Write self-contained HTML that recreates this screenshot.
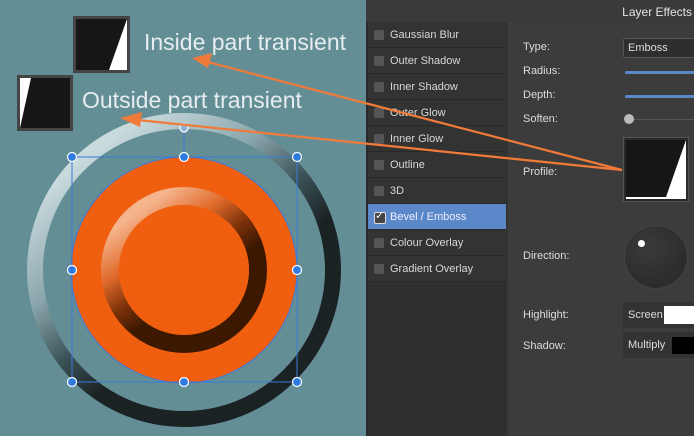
<!DOCTYPE html>
<html><head><style>
*{margin:0;padding:0;box-sizing:border-box}
body{width:694px;height:436px;overflow:hidden;background:#3c3c3c;font-family:"Liberation Sans",sans-serif;position:relative}
.canvas{position:absolute;left:0;top:0;width:366px;height:436px;background:#648e96}
.list{position:absolute;left:368px;top:22px;width:138px;height:414px;background:#2f2f2f}
.item{height:26px;border-bottom:1px solid #292929;background:#333;color:#d8d8d8;font-size:11px;line-height:26px;padding-left:22px;position:relative}
.item:before{content:"";position:absolute;left:6px;top:8px;width:10px;height:10px;background:#555;border-radius:2px}
.item.sel{background:#5b88c8;color:#eef}
.item.sel:before{background:#444;border:1px solid #ddd}
.hdr{position:absolute;left:366px;top:0;width:328px;height:22px;background:#3a3a3a;color:#e4e4e4;font-size:12px;line-height:24px;text-align:right;padding-right:2px}
.lbl{position:absolute;left:523px;color:#ddd;font-size:11px}
</style></head><body>
<div class="canvas"></div>
<div style="position:absolute;left:366px;top:0;width:2px;height:436px;background:#2a2a2a"></div>
<div class="hdr">Layer Effects</div>
<div class="list">
<div class="item">Gaussian Blur</div>
<div class="item">Outer Shadow</div>
<div class="item">Inner Shadow</div>
<div class="item">Outer Glow</div>
<div class="item">Inner Glow</div>
<div class="item">Outline</div>
<div class="item">3D</div>
<div class="item sel">Bevel / Emboss<span style="position:absolute;left:7px;top:-1px;color:#fff;font-size:11px">✓</span></div>
<div class="item">Colour Overlay</div>
<div class="item">Gradient Overlay</div>
</div>
<div style="position:absolute;left:506px;top:22px;width:2px;height:414px;background:#333"></div>
<div class="lbl" style="top:41px">Type:</div>
<div class="lbl" style="top:65px">Radius:</div>
<div class="lbl" style="top:89px">Depth:</div>
<div class="lbl" style="top:113px">Soften:</div>
<div class="lbl" style="top:166px">Profile:</div>
<div class="lbl" style="top:250px">Direction:</div>
<div class="lbl" style="top:309px">Highlight:</div>
<div class="lbl" style="top:340px">Shadow:</div>
<div style="position:absolute;left:623px;top:38px;width:80px;height:20px;background:#2e2e2e;border:1px solid #555;border-radius:2px;color:#ddd;font-size:11px;line-height:18px;padding-left:4px">Emboss</div>
<div style="position:absolute;left:625px;top:71px;width:80px;height:3px;background:#5b88c8;border-radius:2px"></div>
<div style="position:absolute;left:625px;top:95px;width:80px;height:3px;background:#5b88c8;border-radius:2px"></div>
<div style="position:absolute;left:630px;top:119px;width:70px;height:1px;background:#555"></div>
<div style="position:absolute;left:624px;top:114px;width:10px;height:10px;border-radius:50%;background:#bbb"></div>
<div style="position:absolute;left:623px;top:137px;width:66px;height:65px;background:#2a2a2a;border:1px solid #555;padding:2px">
<svg width="60" height="59"><rect width="60" height="59" fill="#fff"/><polygon points="0,0 60,0 40,57 0,57" fill="#161616"/></svg></div>
<div style="position:absolute;left:625px;top:226px;width:62px;height:62px;border-radius:50%;background:radial-gradient(circle at 40% 35%,#3a3a3a,#2c2c2c 70%,#333);box-shadow:0 0 0 1px #444"></div>
<div style="position:absolute;left:638px;top:240px;width:7px;height:7px;border-radius:50%;background:#fff"></div>
<div style="position:absolute;left:623px;top:302px;width:71px;height:26px;background:#333;color:#ddd;font-size:11px;line-height:26px;padding-left:5px">Screen</div>
<div style="position:absolute;left:664px;top:306px;width:30px;height:18px;background:#fff"></div>
<div style="position:absolute;left:623px;top:332px;width:71px;height:26px;background:#333;color:#ddd;font-size:11px;line-height:26px;padding-left:5px">Multiply</div>
<div style="position:absolute;left:672px;top:337px;width:22px;height:17px;background:#000"></div>

<svg style="position:absolute;left:0;top:0" width="694" height="436">
<defs>
<linearGradient id="rg" x1="0.2" y1="0.1" x2="0.7" y2="0.75">
<stop offset="0" stop-color="#c9dadd"/><stop offset="0.35" stop-color="#8aa7ad"/><stop offset="0.6" stop-color="#3b5358"/><stop offset="0.8" stop-color="#1b2224"/></linearGradient>
<linearGradient id="ig" x1="0.2" y1="0.1" x2="0.7" y2="0.8">
<stop offset="0" stop-color="#f6b48d"/><stop offset="0.3" stop-color="#e06a2a"/><stop offset="0.55" stop-color="#7a3008"/><stop offset="0.75" stop-color="#3c1800"/></linearGradient>
</defs>
<circle cx="184" cy="270" r="149" fill="none" stroke="url(#rg)" stroke-width="16"/>
<circle cx="184" cy="270" r="113" fill="#f05e0f"/>
<circle cx="184" cy="270" r="74" fill="none" stroke="url(#ig)" stroke-width="18"/>
<circle cx="184" cy="270" r="65" fill="#f05e0f"/>
<circle cx="184" cy="270" r="113" fill="none" stroke="#3a7ad8" stroke-width="1"/>
<rect x="72" y="157" width="225" height="225" fill="none" stroke="#3a7ad8" stroke-width="1"/>
<line x1="184" y1="128" x2="184" y2="157" stroke="#3a7ad8"/>
<g fill="#2f7ae0" stroke="#fff" stroke-width="1.2">
<circle cx="184" cy="128" r="4" fill="#8fb0d8"/>
<circle cx="72" cy="157" r="4.5"/><circle cx="184" cy="157" r="4.5"/><circle cx="297" cy="157" r="4.5"/>
<circle cx="72" cy="270" r="4.5"/><circle cx="297" cy="270" r="4.5"/>
<circle cx="72" cy="382" r="4.5"/><circle cx="184" cy="382" r="4.5"/><circle cx="297" cy="382" r="4.5"/>
</g>
<g stroke="#f07a3a" stroke-width="2.2" fill="#f07a3a">
<line x1="622" y1="170" x2="200" y2="60"/>
<line x1="622" y1="170" x2="128" y2="119"/>
<polygon points="192,58 212,53 208,68" stroke="none"/>
<polygon points="120,118 142,112 140,127" stroke="none"/>
</g>
<text x="144" y="50" font-family="Liberation Sans" font-size="23" fill="#e6edef">Inside part transient</text>
<text x="82" y="108" font-family="Liberation Sans" font-size="23" fill="#e6edef">Outside part transient</text>
<rect x="74.5" y="17.5" width="54" height="54" fill="#161616" stroke="#444" stroke-width="3"/>
<polygon points="127,19 127,70 109,70" fill="#fff"/>
<rect x="18.5" y="76.5" width="53" height="53" fill="#161616" stroke="#444" stroke-width="3"/>
<polygon points="20,78 31,78 20,128" fill="#fff"/>
</svg>
</body></html>
